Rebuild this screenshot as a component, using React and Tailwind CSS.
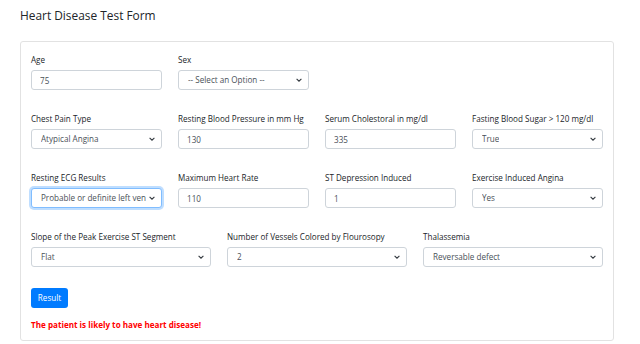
import React from 'react';

const font = { fontFamily: '"Open Sans", "Noto Sans", sans-serif' };

function Chevron() {
  return (
    <svg width="6" height="4" viewBox="0 0 6 4" className="shrink-0">
      <path d="M0.6 0.8 L3 3.2 L5.4 0.8" fill="none" stroke="#343a40" strokeWidth="1.1" />
    </svg>
  );
}

function Field({ label, value, select, focused }) {
  return (
    <div className="flex flex-col">
      <label className="text-[8.1px] leading-[13px] mb-[4px] text-[#212529] whitespace-nowrap">{label}</label>
      {select ? (
        <div
          className={`h-[20px] flex items-center justify-between rounded-[3px] bg-white pl-[9px] pr-[6px] gap-[3px] border ${
            focused ? 'border-[#80bdff] shadow-[0_0_0_2px_rgba(0,123,255,0.25)]' : 'border-[#ced4da]'
          }`}
        >
          <span className="text-[8.1px] text-[#495057] whitespace-nowrap overflow-hidden">{value}</span>
          <Chevron />
        </div>
      ) : (
        <input
          readOnly
          value={value}
          className="h-[20px] w-full rounded-[3px] border border-[#ced4da] bg-white px-[8px] text-[8.1px] text-[#495057] outline-none"
        />
      )}
    </div>
  );
}

export default function App() {
  return (
    <div className="w-[640px] h-[344px] bg-white overflow-hidden px-5" style={font}>
      <h4 className="text-[11.9px] leading-[30px] text-[#212529]">Heart Disease Test Form</h4>
      <div className="mt-[11px] w-[594px] border border-[#e2e2e2] rounded-[3px] px-[10px] pt-[11px] pb-[9px]">
        <div className="grid grid-cols-4 gap-x-4 gap-y-[22px]">
          <Field label="Age" value="75" />
          <Field label="Sex" value="-- Select an Option --" select />
          <div />
          <div />
          <Field label="Chest Pain Type" value="Atypical Angina" select />
          <Field label="Resting Blood Pressure in mm Hg" value="130" />
          <Field label="Serum Cholestoral in mg/dl" value="335" />
          <Field label="Fasting Blood Sugar > 120 mg/dl" value="True" select />
          <Field label="Resting ECG Results" value="Probable or definite left ven" select focused />
          <Field label="Maximum Heart Rate" value="110" />
          <Field label="ST Depression Induced" value="1" />
          <Field label="Exercise Induced Angina" value="Yes" select />
        </div>
        <div className="grid grid-cols-3 gap-x-4 mt-[22px]">
          <Field label="Slope of the Peak Exercise ST Segment" value="Flat" select />
          <Field label="Number of Vessels Colored by Flourosopy" value="2" select />
          <Field label="Thalassemia" value="Reversable defect" select />
        </div>
        <button className="mt-[21px] h-[20px] w-[37px] rounded-[3px] bg-[#007bff] text-white text-[8.1px]">
          Result
        </button>
        <p className="mt-[10px] text-[8.1px] leading-[13px] font-bold text-[#ff0000]">
          The patient is likely to have heart disease!
        </p>
      </div>
    </div>
  );
}
